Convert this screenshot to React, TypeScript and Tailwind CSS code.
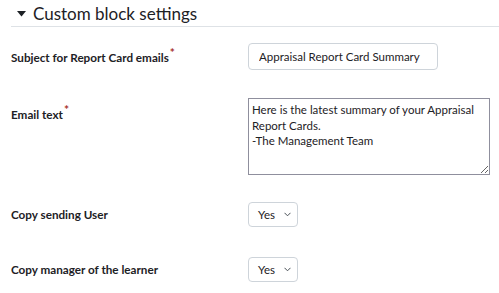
export default function App() {
  const font = { fontFamily: 'Lato, "Open Sans", sans-serif' }
  return (
    <div className="w-[499px] h-[293px] bg-white text-[#1d2125] overflow-hidden" style={font}>
      <div className="ml-[11px] border-b border-[#dee2e6] h-[27px] flex items-center pl-[6px]">
        <svg width="9" height="6" viewBox="0 0 9 6" className="mr-[7px] mt-[1px]">
          <path d="M0 0 L9 0 L4.5 5.5 Z" fill="#1d2125" />
        </svg>
        <span className="text-[17px] leading-none mt-[1px]">Custom block settings</span>
      </div>

      <div className="pl-[11px] pt-[16px]">
        <div className="flex items-center h-[27px]">
          <label className="w-[237px] text-[11.7px] font-bold">
            Subject for Report Card emails<Req />
          </label>
          <input
            readOnly
            value="Appraisal Report Card Summary"
            className="w-[190px] h-[27px] border border-[#ced4da] rounded-[4px] px-[10px] text-[11.5px] text-[#1d2125] outline-none"
            style={font}
          />
        </div>

        <div className="flex items-start mt-[28px]">
          <label className="w-[237px] pt-[6px] text-[11.7px] font-bold">
            Email text<Req />
          </label>
          <textarea
            readOnly
            value={'Here is the latest summary of your Appraisal Report Cards.\n-The Management Team'}
            className="w-[242px] h-[77px] border border-[#8f8f9d] px-[3px] py-[3px] text-[11.5px] leading-[15.5px] text-[#1d2125] outline-none"
            style={font}
          />
        </div>

        <div className="flex items-center h-[25px] mt-[27px]">
          <label className="w-[237px] text-[11.7px] font-bold">Copy sending User</label>
          <YesSelect />
        </div>

        <div className="flex items-center h-[25px] mt-[30px]">
          <label className="w-[237px] text-[11.7px] font-bold">Copy manager of the learner</label>
          <YesSelect />
        </div>
      </div>
    </div>
  )
}

function Req() {
  return <span className="text-[#a8322d] text-[12px] font-bold align-super leading-none ml-[1px]">*</span>
}

function YesSelect() {
  return (
    <div className="w-[50px] h-[25px] border border-[#ced4da] rounded-[4px] flex items-center justify-between pl-[9px] pr-[6px]">
      <span className="text-[11.5px]">Yes</span>
      <svg width="7" height="5" viewBox="0 0 7 5">
        <path d="M0.5 0.8 L3.5 3.8 L6.5 0.8" fill="none" stroke="#495057" strokeWidth="1" />
      </svg>
    </div>
  )
}
